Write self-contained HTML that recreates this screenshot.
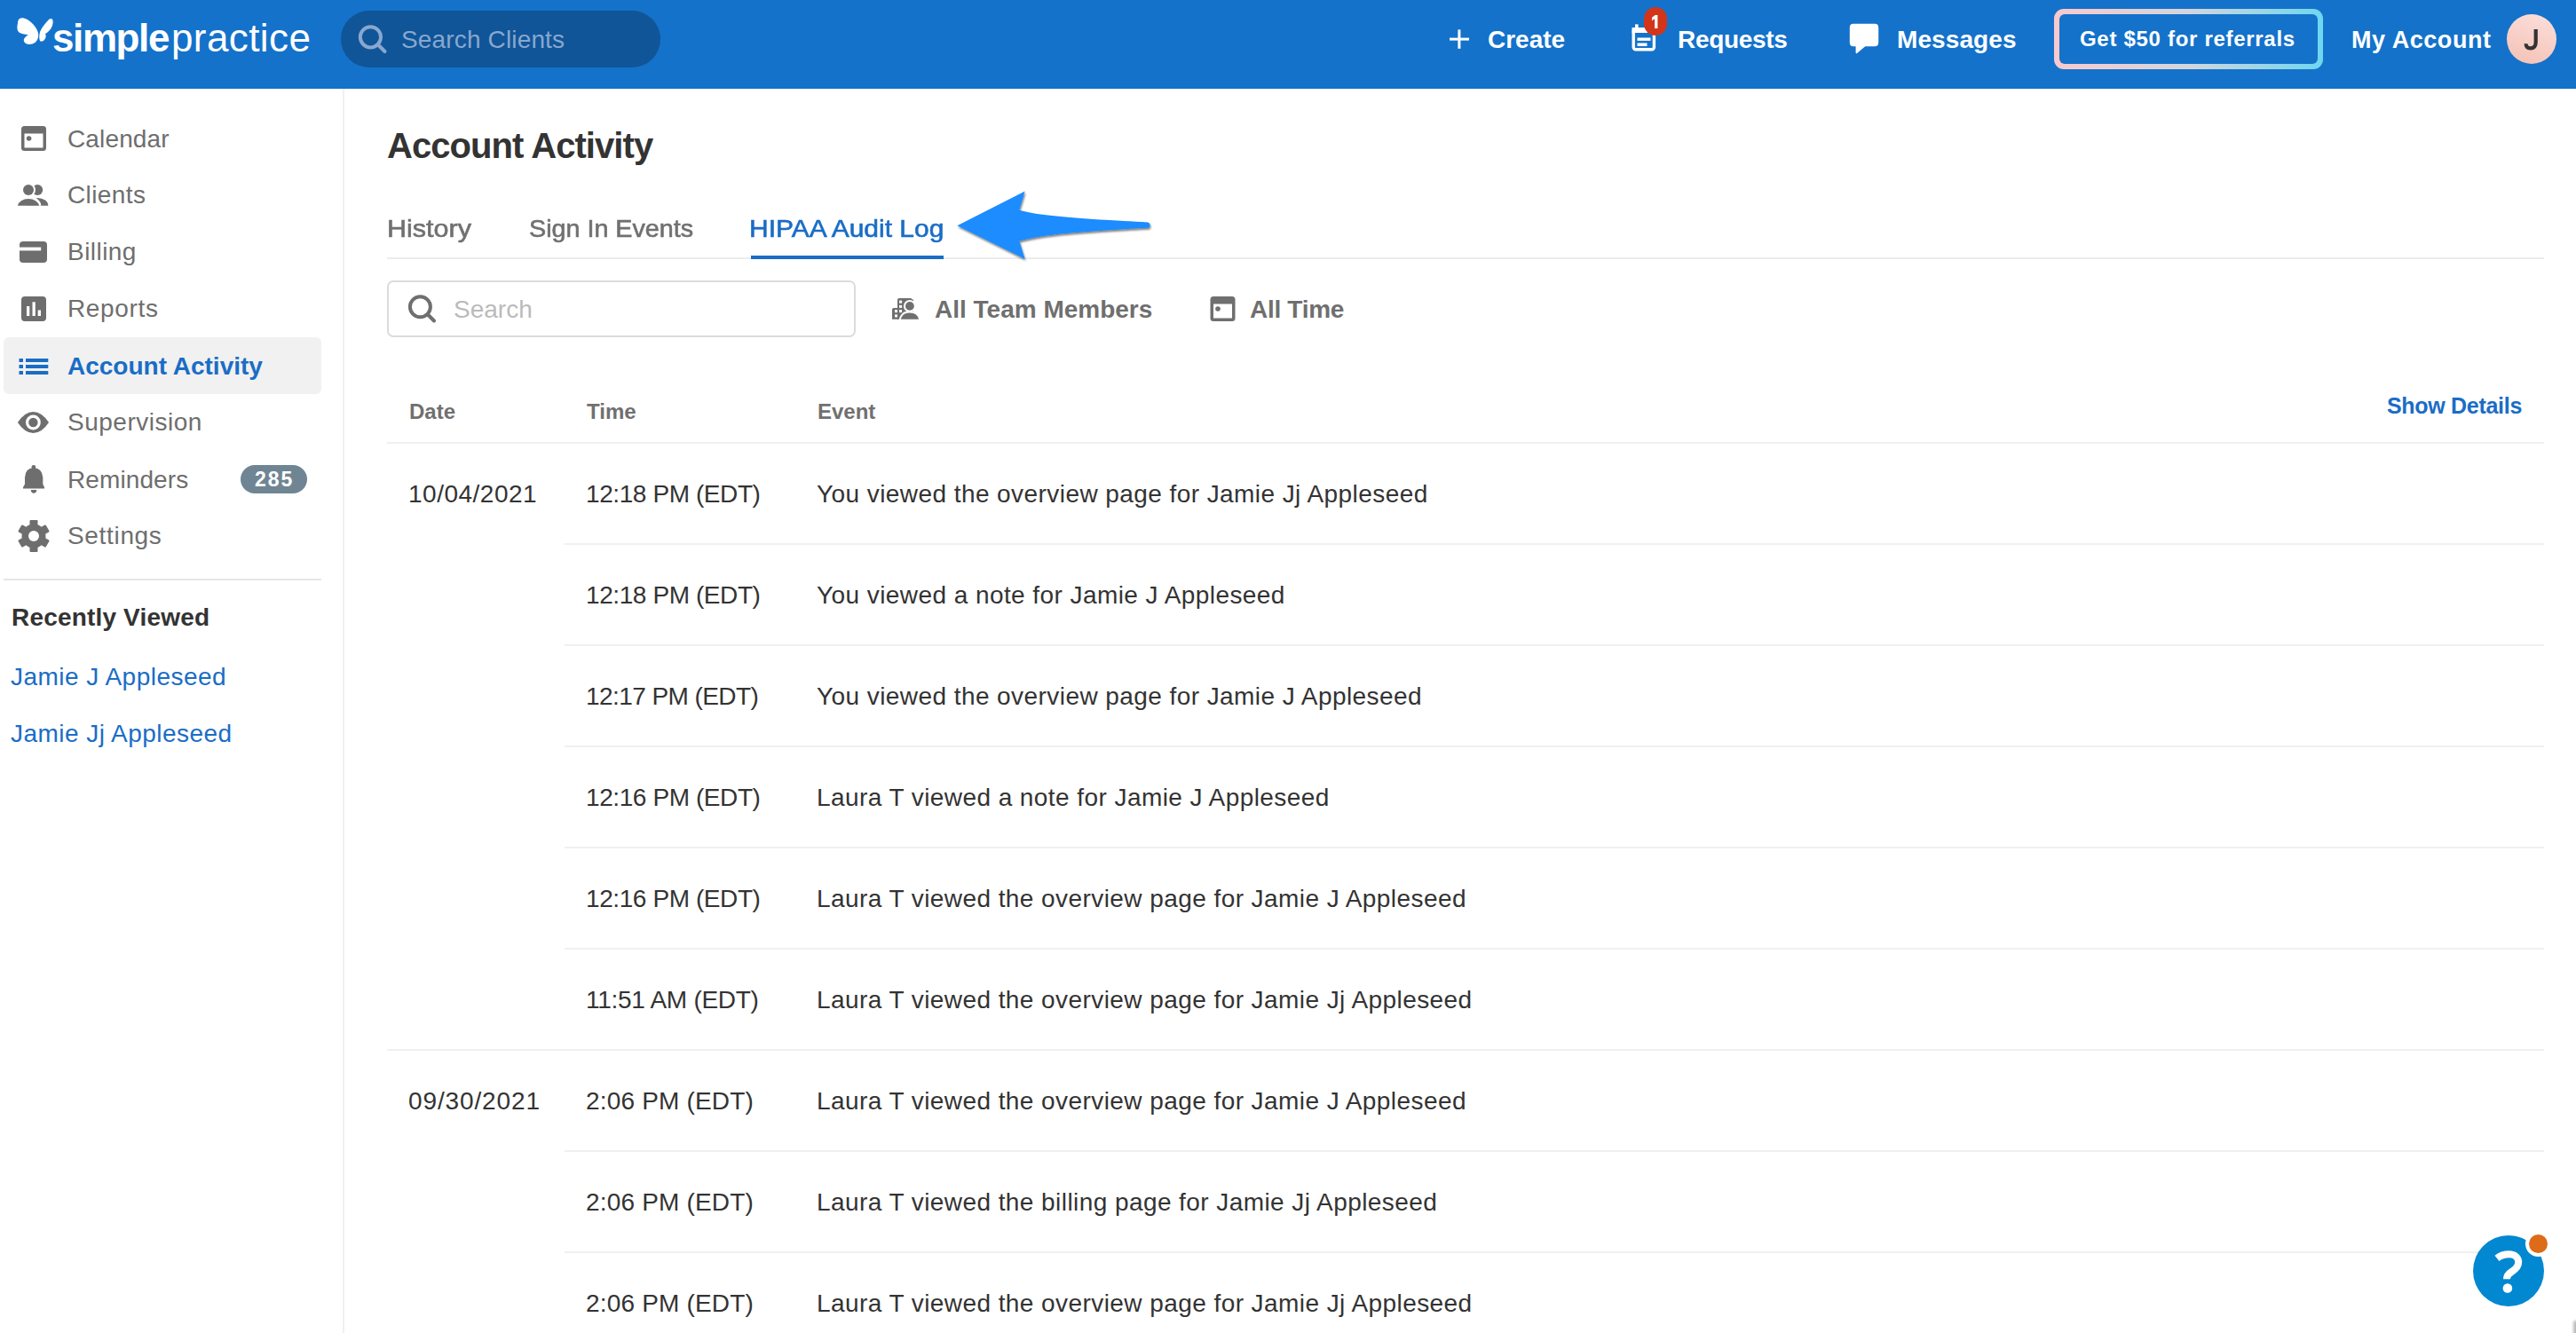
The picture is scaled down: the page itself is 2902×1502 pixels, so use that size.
<!DOCTYPE html>
<html><head><meta charset="utf-8">
<style>
html,body{margin:0;padding:0;width:2902px;height:1502px;overflow:hidden;background:#fff;font-family:"Liberation Sans",sans-serif;}
.a{position:absolute;}
.t{position:absolute;white-space:nowrap;line-height:1;}
.b{font-weight:bold;}
.w{color:#fff;}
.nav{font-size:28px;color:#6e6e6e;left:76px;}
.row{font-size:28px;color:#333;}
.hd{font-size:24px;color:#707070;font-weight:bold;top:452px;}
.dv{position:absolute;height:2px;background:#f0f0f0;}
svg{position:absolute;overflow:visible;}
</style></head><body>

<!-- HEADER -->
<div class="a" style="left:0;top:0;width:2902px;height:100px;background:#1472ca"></div>

<!-- logo -->
<svg style="left:0;top:0" width="70" height="70" viewBox="0 0 70 70">
  <path fill="#fff" d="M22 21 C26 19 32 22 37 27 C42 32 44 38 43 42 C42 47 38 50 33 50 C29 50 26 47 27 44 C28 42 30 40 32 39 C28 39 23 38 21 36 C19 34 19 30 20 26 C20 23 21 22 22 21 Z"/>
  <path fill="#fff" d="M58 21 C60 22 60 25 59 29 C57 34 53 37 51 38 C52 40 52 42 50 45 C48 47 46 47 45 46 C44 44 44 40 45 36 C47 31 51 26 55 22 C56 21 57 21 58 21 Z"/>
</svg>
<div class="t w" id="logo1" style="left:59px;top:21.3px;font-size:44px;font-weight:bold;letter-spacing:-1.4px">simple</div>
<div class="t w" id="logo2" style="left:193px;top:21.3px;font-size:44px;letter-spacing:0.4px">practice</div>

<!-- search pill -->
<div class="a" style="left:384px;top:12px;width:360px;height:64px;border-radius:32px;background:#0f5598"></div>
<svg style="left:0;top:0" width="1" height="1">
  <circle cx="417.4" cy="41.8" r="11.6" fill="none" stroke="#89a7cf" stroke-width="4"/>
  <line x1="426.5" y1="51" x2="433.5" y2="58" stroke="#89a7cf" stroke-width="4" stroke-linecap="round"/>
</svg>
<div class="t" id="sc" style="left:452px;top:31px;letter-spacing:0.15px;font-size:28px;color:#89a7cf">Search Clients</div>

<!-- create -->
<svg style="left:0;top:0" width="1" height="1">
  <rect x="1633" y="42.6" width="22" height="3" fill="#fff"/>
  <rect x="1642.4" y="33.4" width="3" height="21.4" fill="#fff"/>
</svg>
<div class="t w b" id="create" style="left:1676px;top:31px;font-size:28px">Create</div>

<!-- requests -->
<svg style="left:0;top:0" width="1" height="1">
  <rect x="1840.2" y="32.8" width="23.2" height="23" rx="2.5" fill="none" stroke="#fff" stroke-width="3.4"/>
  <rect x="1838.5" y="31" width="26.5" height="6" fill="#fff"/>
  <rect x="1842" y="27.4" width="3.6" height="5" fill="#fff"/>
  <rect x="1844.5" y="42.5" width="15" height="3.4" fill="#fff"/>
  <rect x="1844.5" y="48.5" width="11" height="3.4" fill="#fff"/>
  <rect x="1852" y="8" width="26" height="32" rx="13" fill="#d3351a"/>
  <path fill="#fff" d="M1864.1 32.1 V21.2 L1861 23.2 V19.7 L1864.6 17 H1867.4 V32.1 Z"/>
</svg>
<div class="t w b" id="requests" style="left:1890px;top:31px;letter-spacing:-0.3px;font-size:28px">Requests</div>

<!-- messages -->
<svg style="left:0;top:0" width="1" height="1">
  <path fill="#fff" d="M2088 26.8 H2112 Q2116.2 26.8 2116.2 31 V48 Q2116.2 52.2 2112 52.2 H2101.3 L2092 60 Q2090.6 61 2090.6 59 V52.2 H2088 Q2083.8 52.2 2083.8 48 V31 Q2083.8 26.8 2088 26.8 Z"/>
</svg>
<div class="t w b" id="messages" style="left:2137px;top:31px;letter-spacing:0.1px;font-size:28px">Messages</div>

<!-- referral button -->
<div class="a" style="left:2314px;top:10px;width:303px;height:68px;border-radius:11px;background:linear-gradient(90deg,#f9c9cd,#d3d6dc 50%,#6fd6f0)"></div>
<div class="a" style="left:2320px;top:16px;width:291px;height:56px;border-radius:6px;background:#1472ca"></div>
<div class="t w b" id="ref" style="left:2343px;top:32px;font-size:24px;letter-spacing:0.7px">Get $50 for referrals</div>

<!-- my account -->
<div class="t w b" id="myacc" style="left:2649px;top:31.5px;font-size:27px;letter-spacing:0.55px">My Account</div>
<div class="a" style="left:2824px;top:16px;width:56px;height:56px;border-radius:50%;background:linear-gradient(200deg,#fbe0dc,#f4c0b4)"></div>
<svg style="left:0;top:0" width="1" height="1"><path fill="none" stroke="#333" stroke-width="4.2" d="M2856.7 33.1 V47.5 C2856.7 52.3 2854.2 54.4 2850.6 54.4 C2847.3 54.4 2845.4 52.4 2845.8 49.3"/></svg>

<!-- SIDEBAR -->
<div class="a" style="left:386px;top:100px;width:2px;height:1402px;background:#f0f0f0"></div>
<div class="a" style="left:4px;top:380px;width:358px;height:64px;border-radius:6px;background:#f1f1f1"></div>

<svg style="left:0;top:0" width="1" height="1">
  <!-- calendar -->
  <rect x="24" y="142" width="28" height="28" rx="3.5" fill="#6e6e6e"/>
  <rect x="27.5" y="150.5" width="21" height="16" fill="#fff"/>
  <circle cx="32.6" cy="156" r="2.8" fill="#6e6e6e"/>
  <!-- clients -->
  <circle cx="42.2" cy="214" r="6" fill="#6e6e6e"/>
  <path fill="#6e6e6e" d="M30.1 231.8 A12.1 8.8 0 0 1 54.3 231.8 Z"/>
  <circle cx="32" cy="214" r="8" fill="#fff"/>
  <path fill="#fff" d="M17.9 231.8 A14.2 10.8 0 0 1 46.3 231.8 Z"/>
  <circle cx="32" cy="214" r="6" fill="#6e6e6e"/>
  <path fill="#6e6e6e" d="M19.9 231.8 A12.2 8.8 0 0 1 44.1 231.8 Z"/>
  <!-- billing -->
  <rect x="22" y="272" width="31" height="24" rx="4" fill="#6e6e6e"/>
  <rect x="22" y="278.6" width="24.2" height="3.8" fill="#fff"/>
  <!-- reports -->
  <rect x="24" y="334" width="28" height="28" rx="4" fill="#6e6e6e"/>
  <rect x="30" y="345" width="3.3" height="11" fill="#fff"/>
  <rect x="36.5" y="340.3" width="3.3" height="15.7" fill="#fff"/>
  <rect x="42.7" y="349.5" width="3.3" height="6.5" fill="#fff"/>
  <!-- list (active) -->
  <rect x="21.5" y="404" width="4.5" height="4" fill="#1a6dc6"/>
  <rect x="29" y="404" width="25.3" height="4" fill="#1a6dc6"/>
  <rect x="21.5" y="411" width="4.5" height="4" fill="#1a6dc6"/>
  <rect x="29" y="411" width="25.3" height="4" fill="#1a6dc6"/>
  <rect x="21.5" y="418" width="4.5" height="4" fill="#1a6dc6"/>
  <rect x="29" y="418" width="25.3" height="4" fill="#1a6dc6"/>
  <!-- eye -->
  <path fill="#6e6e6e" d="M19.9 476 Q28 464 37.4 464 Q47 464 55 476 Q47 488 37.4 488 Q28 488 19.9 476 Z"/>
  <circle cx="37.4" cy="476" r="8.4" fill="#fff"/>
  <circle cx="37.4" cy="476" r="5.2" fill="#6e6e6e"/>
  <!-- bell -->
  <circle cx="37.9" cy="526.5" r="2.4" fill="#6e6e6e"/>
  <path fill="#6e6e6e" d="M37.9 527 Q47.5 527.5 48.3 538 V545.5 L50 549 V550.5 H26 V549 L28 545.5 V538 Q28.5 527.5 37.9 527 Z"/>
  <path fill="#6e6e6e" d="M34.8 552 H41.3 Q41 555.8 38 555.8 Q35 555.8 34.8 552 Z"/>
</svg>
<!-- gear -->
<svg style="left:19px;top:585px" width="38" height="38" viewBox="-19 -19 38 38">
  <g fill="#6e6e6e">
    <circle r="13.5"/>
    <rect x="-4.5" y="-18" width="9" height="8" rx="1"/>
    <rect x="-4.5" y="-18" width="9" height="8" rx="1" transform="rotate(60)"/>
    <rect x="-4.5" y="-18" width="9" height="8" rx="1" transform="rotate(120)"/>
    <rect x="-4.5" y="-18" width="9" height="8" rx="1" transform="rotate(180)"/>
    <rect x="-4.5" y="-18" width="9" height="8" rx="1" transform="rotate(240)"/>
    <rect x="-4.5" y="-18" width="9" height="8" rx="1" transform="rotate(300)"/>
  </g>
  <circle r="6" fill="#fff"/>
</svg>

<div class="t nav" style="top:143px;letter-spacing:0.14px">Calendar</div>
<div class="t nav" style="top:206px;letter-spacing:0.4px">Clients</div>
<div class="t nav" style="top:270px;letter-spacing:0.45px">Billing</div>
<div class="t nav" style="top:333.5px;letter-spacing:0.65px">Reports</div>
<div class="t nav b" style="top:398.5px;color:#1a6dc6">Account Activity</div>
<div class="t nav" style="top:462px;letter-spacing:0.5px">Supervision</div>
<div class="t nav" style="top:527px;letter-spacing:0.1px">Reminders</div>
<div class="a" style="left:271px;top:524px;width:75px;height:32px;border-radius:16px;background:#6f8594"></div>
<div class="t w b" style="left:287px;top:528.8px;font-size:23px;letter-spacing:1.9px">285</div>
<div class="t nav" style="top:590px;letter-spacing:0.67px">Settings</div>

<div class="a" style="left:4px;top:652px;width:358px;height:2px;background:#e6e6e6"></div>
<div class="t b" style="left:13px;top:682px;font-size:28px;color:#333;letter-spacing:0.18px">Recently Viewed</div>
<div class="t" style="left:12px;top:749px;font-size:28px;color:#1a6dc6;letter-spacing:0.47px">Jamie J Appleseed</div>
<div class="t" style="left:12px;top:813px;font-size:28px;color:#1a6dc6;letter-spacing:0.46px">Jamie Jj Appleseed</div>

<!-- MAIN -->
<div class="t b" id="title" style="left:436px;top:144px;font-size:40px;letter-spacing:-0.93px;color:#333">Account Activity</div>

<div class="t" id="tab1" style="left:435.5px;top:243.5px;font-size:28px;color:#707070;-webkit-text-stroke:0.6px #707070;transform:scaleX(1.09);transform-origin:0 0">History</div>
<div class="t" id="tab2" style="left:595.5px;top:243.5px;font-size:28px;color:#707070;-webkit-text-stroke:0.6px #707070;transform:scaleX(1.025);transform-origin:0 0">Sign In Events</div>
<div class="t" id="tab3" style="left:844px;top:243.5px;font-size:28px;color:#1a6dc6;-webkit-text-stroke:0.6px #1a6dc6;transform:scaleX(1.07);transform-origin:0 0">HIPAA Audit Log</div>
<div class="a" style="left:436px;top:290px;width:2430px;height:2px;background:#ececec"></div>
<div class="a" style="left:846px;top:288px;width:217px;height:4px;background:#1a6dc6"></div>

<!-- arrow -->
<svg style="left:0;top:0" width="1" height="1">
  <defs><filter id="sh" x="-10%" y="-30%" width="120%" height="160%"><feGaussianBlur in="SourceAlpha" stdDeviation="1"/><feOffset dx="0.5" dy="1.5"/><feComponentTransfer><feFuncA type="linear" slope="0.5"/></feComponentTransfer><feMerge><feMergeNode/><feMergeNode in="SourceGraphic"/></feMerge></filter></defs>
  <path filter="url(#sh)" fill="#1a8cff" d="M1078.4 254.3 L1154.6 215.5 L1148.3 236.7 C1170 243 1210 246 1293 250.5 A3.2 3.2 0 0 1 1293 256.8 C1210 261 1170 265 1148.3 271.6 L1154.6 291.7 Z"/>
</svg>

<!-- filters -->
<div class="a" style="left:436px;top:316px;width:524px;height:60px;border:2px solid #dcdcdc;border-radius:7px"></div>
<svg style="left:0;top:0" width="1" height="1">
  <circle cx="473.4" cy="345.7" r="11.5" fill="none" stroke="#6f6f6f" stroke-width="4"/>
  <line x1="482.5" y1="355" x2="489" y2="361.5" stroke="#6f6f6f" stroke-width="4" stroke-linecap="round"/>
</svg>
<div class="t" id="srch" style="left:511px;top:335px;font-size:28px;color:#bbb">Search</div>

<svg style="left:0;top:0" width="1" height="1">
  <defs><mask id="tm" maskUnits="userSpaceOnUse" x="990" y="320" width="60" height="50">
    <rect x="990" y="320" width="60" height="50" fill="#fff"/>
    <circle cx="1024.9" cy="344.9" r="7" fill="#000"/>
    <path d="M1012.6 361 Q1014.5 350.3 1024.9 350.3 Q1035.3 350.3 1037.2 361 Z" fill="#000"/>
  </mask></defs>
  <g mask="url(#tm)" fill="#6f6f6f">
    <path d="M1011 359.8 V338 Q1011 336.1 1013 336.1 H1026 L1029 338 V359.8 Z"/>
    <path d="M1005 359.8 V348.8 Q1005 347 1006.8 347 H1012 V359.8 Z"/>
  </g>
  <g fill="#fff">
    <rect x="1013" y="338.6" width="3.1" height="3"/>
    <rect x="1013" y="343.9" width="3.1" height="3"/>
    <rect x="1013" y="349.1" width="3.1" height="3"/>
    <rect x="1008" y="349.1" width="3" height="3"/>
    <rect x="1008" y="354.4" width="3" height="3"/>
  </g>
  <g fill="#6f6f6f">
    <circle cx="1024.9" cy="344.9" r="4.9"/>
    <path d="M1014.8 359.8 Q1016.5 352.5 1024.9 352.5 Q1033.3 352.5 1035 359.8 Z"/>
  </g>
</svg>
<div class="t b" id="team" style="left:1053px;top:335px;font-size:28px;color:#6f6f6f">All Team Members</div>

<svg style="left:0;top:0" width="1" height="1">
  <rect x="1363.5" y="334" width="28" height="28" rx="3.5" fill="#6f6f6f"/>
  <rect x="1367" y="342.5" width="21" height="16" fill="#fff"/>
  <circle cx="1372" cy="348" r="2.8" fill="#6f6f6f"/>
</svg>
<div class="t b" id="alltime" style="left:1408px;top:335px;letter-spacing:-0.3px;font-size:28px;color:#6f6f6f">All Time</div>

<!-- table header -->
<div class="t hd" style="left:461px">Date</div>
<div class="t hd" style="left:661px">Time</div>
<div class="t hd" style="left:921px">Event</div>
<div class="t b" id="show" style="left:2689px;top:445px;font-size:25px;letter-spacing:-0.3px;color:#1a6dc6">Show Details</div>
<div class="dv" style="left:436px;top:498px;width:2430px"></div>

<div class="t row" style="left:460px;top:543.3px;letter-spacing:0.5px">10/04/2021</div>
<div class="t row" style="left:660px;top:543.3px;letter-spacing:-0.41px">12:18 PM (EDT)</div>
<div class="t row" style="left:920px;top:543.3px;letter-spacing:0.43px">You viewed the overview page for Jamie Jj Appleseed</div>
<div class="dv" style="left:636px;top:612px;width:2230px"></div>
<div class="t row" style="left:660px;top:657.3px;letter-spacing:-0.41px">12:18 PM (EDT)</div>
<div class="t row" style="left:920px;top:657.3px;letter-spacing:0.43px">You viewed a note for Jamie J Appleseed</div>
<div class="dv" style="left:636px;top:726px;width:2230px"></div>
<div class="t row" style="left:660px;top:771.3px;letter-spacing:-0.57px">12:17 PM (EDT)</div>
<div class="t row" style="left:920px;top:771.3px;letter-spacing:0.43px">You viewed the overview page for Jamie J Appleseed</div>
<div class="dv" style="left:636px;top:840px;width:2230px"></div>
<div class="t row" style="left:660px;top:885.3px;letter-spacing:-0.41px">12:16 PM (EDT)</div>
<div class="t row" style="left:920px;top:885.3px;letter-spacing:0.43px">Laura T viewed a note for Jamie J Appleseed</div>
<div class="dv" style="left:636px;top:954px;width:2230px"></div>
<div class="t row" style="left:660px;top:999.3px;letter-spacing:-0.41px">12:16 PM (EDT)</div>
<div class="t row" style="left:920px;top:999.3px;letter-spacing:0.43px">Laura T viewed the overview page for Jamie J Appleseed</div>
<div class="dv" style="left:636px;top:1068px;width:2230px"></div>
<div class="t row" style="left:660px;top:1113.3px;letter-spacing:-0.29px">11:51 AM (EDT)</div>
<div class="t row" style="left:920px;top:1113.3px;letter-spacing:0.43px">Laura T viewed the overview page for Jamie Jj Appleseed</div>
<div class="dv" style="left:436px;top:1182px;width:2430px"></div>
<div class="t row" style="left:460px;top:1227.3px;letter-spacing:0.87px">09/30/2021</div>
<div class="t row" style="left:660px;top:1227.3px;letter-spacing:0.18px">2:06 PM (EDT)</div>
<div class="t row" style="left:920px;top:1227.3px;letter-spacing:0.43px">Laura T viewed the overview page for Jamie J Appleseed</div>
<div class="dv" style="left:636px;top:1296px;width:2230px"></div>
<div class="t row" style="left:660px;top:1341.3px;letter-spacing:0.18px">2:06 PM (EDT)</div>
<div class="t row" style="left:920px;top:1341.3px;letter-spacing:0.43px">Laura T viewed the billing page for Jamie Jj Appleseed</div>
<div class="dv" style="left:636px;top:1410px;width:2230px"></div>
<div class="t row" style="left:660px;top:1455.3px;letter-spacing:0.18px">2:06 PM (EDT)</div>
<div class="t row" style="left:920px;top:1455.3px;letter-spacing:0.43px">Laura T viewed the overview page for Jamie Jj Appleseed</div>

<!-- help -->
<div class="a" style="left:2786px;top:1392px;width:80px;height:80px;border-radius:50%;background:#0288d1"></div>
<div class="a" style="left:2845px;top:1387px;width:29px;height:29px;border-radius:50%;background:#fff"></div>
<div class="a" style="left:2849px;top:1391px;width:21px;height:21px;border-radius:50%;background:#dd6b1a"></div>
<svg style="left:0;top:0" width="1" height="1">
  <path fill="none" stroke="#fff" stroke-width="8" d="M2813 1417.8 C2817 1414.6 2821.5 1413.3 2826.5 1413.3 C2833.5 1413.3 2837.2 1417.3 2837.2 1422.3 C2837.2 1427.5 2833.5 1430.5 2829.5 1433 C2825.5 1435.5 2824 1437.5 2824 1441.3"/>
  <circle cx="2824.9" cy="1451.5" r="5.3" fill="#fff"/>
</svg>
<div class="a" style="left:2899px;top:1488px;width:6px;height:20px;border-radius:3px;background:#bbb;filter:blur(1.5px)"></div>

</body></html>
